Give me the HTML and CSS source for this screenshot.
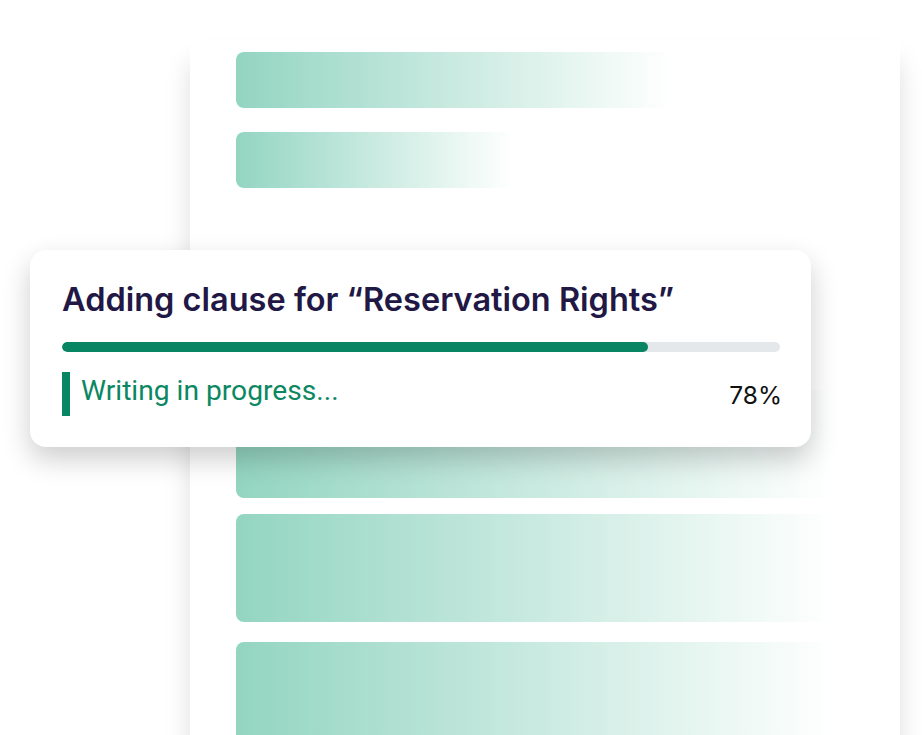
FILE: index.html
```html
<!DOCTYPE html>
<html>
<head>
<meta charset="utf-8">
<link rel="stylesheet" href="styles.css">
</head>
<body>
<div class="stage">
  <div class="doc">
    <div class="bar bar-1"></div>
    <div class="bar bar-2"></div>
    <div class="bar bar-3"></div>
    <div class="bar bar-4"></div>
    <div class="bar bar-5"></div>
  </div>
  <div class="popup">
    <h1 class="title">Adding clause for “Reservation Rights”</h1>
    <div class="track"><div class="fill"></div></div>
    <div class="status">
      <span class="status-text">Writing in progress...</span>
      <span class="pct">78%</span>
    </div>
  </div>
</div>
</body>
</html>
```

FILE: styles.css
```css
html, body {
  margin: 0;
  padding: 0;
  background: #ffffff;
}
.stage {
  position: relative;
  width: 922px;
  height: 735px;
  overflow: hidden;
  background: #ffffff;
}
.doc {
  margin-left: 190px;
  margin-top: 40px;
  width: 710px;
  height: 760px;
  background: #ffffff;
  box-shadow: 0 22px 24px rgba(0, 0, 0, 0.13);
  padding: 12px 0 0 46px;
  box-sizing: border-box;
  display: flex;
  flex-direction: column;
}
.bar {
  border-radius: 8px;
  background: linear-gradient(90deg, #93d5c1 0%, rgba(147, 213, 193, 0.55) 45%, rgba(147, 213, 193, 0) 100%);
  flex: none;
}
.bar-1 { width: 436px; height: 56px; }
.bar-2 { width: 276px; height: 56px; margin-top: 24px; }
.bar-3 { width: 600px; height: 108px; margin-top: 202px; }
.bar-4 { width: 600px; height: 108px; margin-top: 16px; }
.bar-5 { width: 600px; height: 108px; margin-top: 20px; }

.popup {
  position: absolute;
  left: 30px;
  top: 250px;
  width: 781px;
  height: 197px;
  box-sizing: border-box;
  padding: 30px 31px 0 32px;
  background: #ffffff;
  border-radius: 16px;
  box-shadow: 0 12px 28px rgba(0, 0, 0, 0.2);
  display: flex;
  flex-direction: column;
}
.title {
  margin: 0;
  font-family: Inter, "Noto Sans", sans-serif;
  font-weight: 600;
  font-size: 32.5px;
  line-height: 40px;
  color: #211845;
  letter-spacing: 0;
}
.track {
  margin-top: 22px;
  height: 10px;
  border-radius: 5px;
  background: #e5e8eb;
  overflow: hidden;
}
.fill {
  width: 81.6%;
  height: 100%;
  border-radius: 5px;
  background: #088562;
}
.status {
  margin-top: 20px;
  height: 44px;
  display: flex;
  align-items: center;
  justify-content: space-between;
  border-left: 8px solid #088562;
  padding-left: 11px;
}
.status-text {
  font-family: Roboto, "Noto Sans", sans-serif;
  font-size: 28.2px;
  line-height: 34px;
  font-weight: 400;
  color: #0b8762;
  margin-top: -6px;
}
.pct {
  font-family: Inter, "Noto Sans", sans-serif;
  font-size: 24.5px;
  line-height: 34px;
  font-weight: 400;
  color: #111111;
  margin-top: 2px;
  margin-right: -2px;
}
```
